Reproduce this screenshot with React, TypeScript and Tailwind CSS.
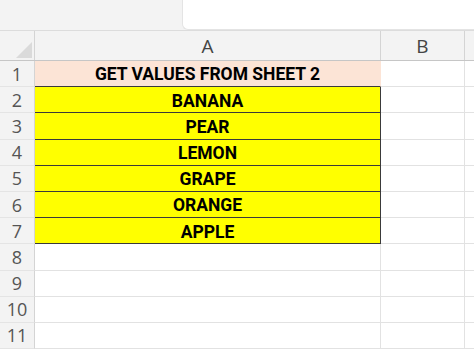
import React from 'react';

const rows: { label: string; bg: string }[] = [
    { label: 'GET VALUES FROM SHEET 2', bg: 'peach' },
    { label: 'BANANA', bg: 'yellow' },
    { label: 'PEAR', bg: 'yellow' },
    { label: 'LEMON', bg: 'yellow' },
    { label: 'GRAPE', bg: 'yellow' },
    { label: 'ORANGE', bg: 'yellow' },
    { label: 'APPLE', bg: 'yellow' },
    { label: '', bg: '' },
    { label: '', bg: '' },
    { label: '', bg: '' },
    { label: '', bg: '' },
];

export default function App() {
    return (
        <div className="w-[474px] h-[350px] overflow-hidden bg-white font-['Liberation_Sans',sans-serif]">
            {/* Top strip */}
            <div className="h-[31px] bg-[#f3f3f3] flex border-b border-[#dcdcdc]">
                <div className="w-[182px]" />
                <div className="flex-1 h-[30px] bg-white rounded-bl-[6px] border-l border-b border-[#e4e4e4]" />
            </div>

            {/* Column headers */}
            <div className="flex h-[30px] bg-[#f3f3f3] border-b border-[#c6c6c6]">
                <div className="w-[35px] relative border-r border-[#d4d4d4]">
                    <svg className="absolute left-0 top-0" width="35" height="30" viewBox="0 0 35 30">
                        <polygon points="16,27 32,27 32,11" fill="#dadada" />
                    </svg>
                </div>
                <div className="w-[346px] flex items-center justify-center pt-[2px] text-[19px] text-[#444] border-r border-[#d4d4d4] font-['Open_Sans',sans-serif]">A</div>
                <div className="w-[84px] flex items-center justify-center pt-[2px] text-[19px] text-[#444] border-r border-[#d4d4d4] font-['Open_Sans',sans-serif]">B</div>
                <div className="flex-1" />
            </div>

            {/* Rows */}
            {rows.map((r, i) => (
                <div key={i} className="flex h-[26.2px]">
                    <div className="w-[35px] bg-[#f3f3f3] border-r border-[#d4d4d4] border-b border-b-[#e4e4e4] flex items-center justify-center pt-[1px] text-[18px] text-[#555] font-['Open_Sans',sans-serif]">
                        {i + 1}
                    </div>
                    <div
                        className={
                            r.bg === 'yellow'
                                ? 'w-[346px] bg-[#ffff00] border-b border-r border-[#3a3a3a] flex items-center justify-center pt-[2px] text-[17.5px] font-bold text-black font-[Roboto,sans-serif]'
                                : r.bg === 'peach'
                                  ? 'w-[346px] bg-[#fce4d6] border-b border-b-[#3a3a3a] border-r border-r-[#fce4d6] flex items-center justify-center pt-[2px] text-[17.5px] font-bold text-black font-[Roboto,sans-serif]'
                                  : 'w-[346px] border-b border-r border-[#e2e2e2]'
                        }
                    >
                        {r.label}
                    </div>
                    <div className="w-[84px] border-b border-r border-[#e2e2e2]" />
                    <div className="flex-1 border-b border-[#e2e2e2]" />
                </div>
            ))}
        </div>
    );
}
